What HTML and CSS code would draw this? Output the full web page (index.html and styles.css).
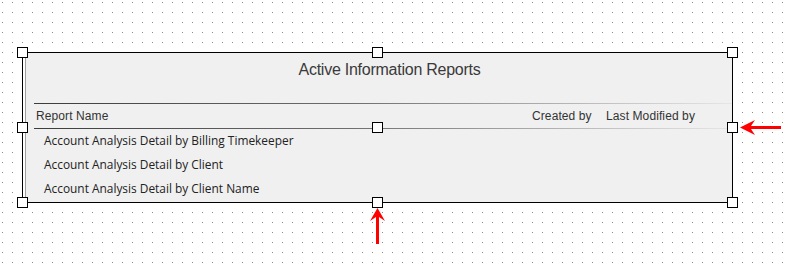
FILE: index.html
```html
<!DOCTYPE html>
<html lang="en">
<head>
    <meta charset="UTF-8">
    <meta name="viewport" content="width=device-width, initial-scale=1.0">
    <title>Report Designer</title>
    <link rel="stylesheet" href="styles.css">
</head>
<body>
    <div class="canvas">
        <div class="report">
            <div class="panel">
                <h2 class="title">Active Information Reports</h2>
                <div class="rule"></div>
                <div class="head">
                    <span class="col-name">Report Name</span>
                    <span class="col-created">Created by</span>
                    <span class="col-modified">Last Modified by</span>
                </div>
                <div class="rule"></div>
                <ul class="rows">
                    <li>Account Analysis Detail by Billing Timekeeper</li>
                    <li>Account Analysis Detail by Client</li>
                    <li>Account Analysis Detail by Client Name</li>
                </ul>
            </div>

            <!-- selection handles -->
            <span class="handle h-tl"></span>
            <span class="handle h-tc"></span>
            <span class="handle h-tr"></span>
            <span class="handle h-ml"></span>
            <span class="handle h-mc"></span>
            <span class="handle h-mr"></span>
            <span class="handle h-bl"></span>
            <span class="handle h-bc"></span>
            <span class="handle h-br"></span>
        </div>

        <svg class="arrow arrow-left" width="46" height="20" viewBox="0 0 46 20">
            <polygon points="2,9.5 17,2 13,8 43,8 43,11 13,11 17,17" fill="#f00"/>
        </svg>
        <svg class="arrow arrow-up" width="17" height="40" viewBox="0 0 17 40">
            <polygon points="8.5,2 16,15 10,11 10,38 7,38 7,11 1,15" fill="#f00"/>
        </svg>
    </div>
</body>
</html>
```

FILE: styles.css
```css
body {
    margin: 0;
    padding: 0;
    font-family: "Liberation Sans", Arial, sans-serif;
    background-color: #8a8a8a;
    background-image:
        linear-gradient(to right, transparent 1px, #fff 1px),
        linear-gradient(to bottom, transparent 1px, #fff 1px);
    background-size: 10px 10px;
    background-position: 2px 2px;
    height: 264px;
}
.canvas {
    position: relative;
    padding: 52px 0 0 22px;
}
.report {
    position: relative;
    box-sizing: border-box;
    width: 711px;
    height: 151px;
    border: 1px solid #000;
    background: #fff;
}
.panel {
    height: 100%;
    margin-left: 2px;
    border-left: 1px solid #a0a0a0;
    background: #f0f0f0;
}
.title {
    margin: 0;
    padding: 7px 0 0 21px;
    font-size: 16px;
    font-weight: normal;
    line-height: 20px;
    letter-spacing: -0.25px;
    text-align: center;
    color: #3a3a3a;
}
.rule {
    height: 1px;
    margin-left: 8px;
    background: linear-gradient(to right, #3c3c3c, #6e6e6e 45%, #c8c8c8 85%, #e6e6e6);
}
.title + .rule {
    margin-top: 23px;
}
.head {
    display: flex;
    height: 24px;
    line-height: 24px;
    margin-left: 8px;
    padding-left: 2px;
    font-size: 12px;
    letter-spacing: 0.1px;
    color: #333;
}
.col-name {
    flex: 1;
}
.col-created {
    width: 74px;
}
.col-modified {
    width: 126px;
}
.rows {
    list-style: none;
    margin: 0;
    padding: 0 0 0 18px;
    font-family: "Open Sans", "Noto Sans", sans-serif;
    font-size: 11.9px;
    color: #222;
}
.rows li {
    line-height: 20px;
    padding: 1px 0 3px;
}
.handle {
    position: absolute;
    box-sizing: border-box;
    width: 11px;
    height: 11px;
    border: 1px solid #000;
    background: #fff;
}
.h-tl { left: -6px; top: -6px; }
.h-tc { left: 349px; top: -6px; }
.h-tr { left: 704px; top: -6px; }
.h-ml { left: -6px; top: 69px; }
.h-mc { left: 349px; top: 69px; }
.h-mr { left: 704px; top: 69px; }
.h-bl { left: -6px; top: 144px; }
.h-bc { left: 349px; top: 144px; }
.h-br { left: 704px; top: 144px; }
.arrow {
    position: absolute;
    display: block;
}
.arrow-left {
    left: 738px;
    top: 118px;
}
.arrow-up {
    left: 369px;
    top: 206px;
}
```
